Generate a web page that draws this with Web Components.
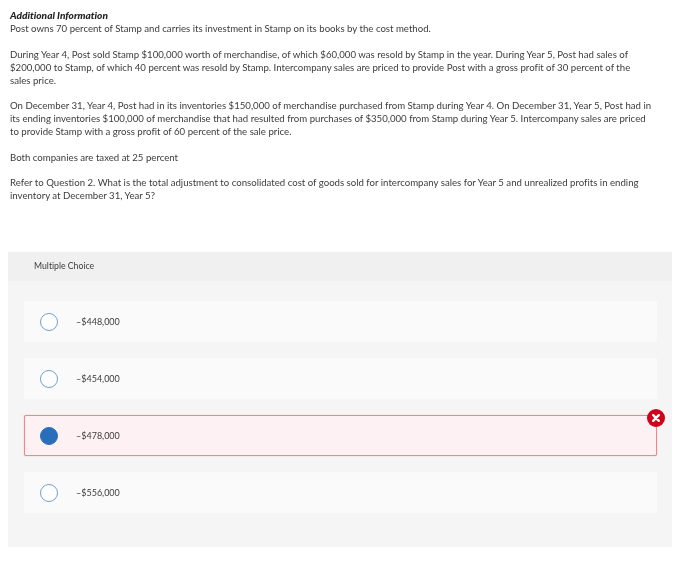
<!DOCTYPE html>
<html>
<head>
<meta charset="utf-8">
<style>
  html, body { margin: 0; background: #fff; }
  body { font-family: Lato, "Liberation Sans", sans-serif; color: #444; width: 689px; height: 561px; overflow: hidden; font-variant-ligatures: none; }
</style>
</head>
<body>
<question-text>
  <b slot="title">Additional Information</b>
  <p>Post owns 70 percent of Stamp and carries its investment in Stamp on its books by the cost method.</p>
  <p>During Year 4, Post sold Stamp $100,000 worth of merchandise, of which $60,000 was resold by Stamp in the year. During Year 5, Post had sales of<br>$200,000 to Stamp, of which 40 percent was resold by Stamp. Intercompany sales are priced to provide Post with a gross profit of 30 percent of the<br>sales price.</p>
  <p>On December 31, Year 4, Post had in its inventories $150,000 of merchandise purchased from Stamp during Year 4. On December 31, Year 5, Post had in<br>its ending inventories $100,000 of merchandise that had resulted from purchases of $350,000 from Stamp during Year 5. Intercompany sales are priced<br>to provide Stamp with a gross profit of 60 percent of the sale price.</p>
  <p>Both companies are taxed at 25 percent</p>
  <p>Refer to Question 2. What is the total adjustment to consolidated cost of goods sold for intercompany sales for Year 5 and unrealized profits in ending<br>inventory at December 31, Year 5?</p>
</question-text>
<choice-panel label="Multiple Choice">
  <choice-option>–$448,000</choice-option>
  <choice-option>–$454,000</choice-option>
  <choice-option selected wrong>–$478,000</choice-option>
  <choice-option>–$556,000</choice-option>
</choice-panel>
<script>
class QuestionText extends HTMLElement {
  connectedCallback() {
    this.shadow = this.attachShadow({ mode: 'open' });
    this.shadow.innerHTML = `<style>${this.css()}</style><div class="title"><slot name="title"></slot></div><div class="body"><slot></slot></div>`;
  }

  css() {
    return `
      :host {
        display: block;
        height: 252px;
        box-sizing: border-box;
        padding: 9px 0 0 10px;
        font-size: 9.64px;
        line-height: 13px;
        color: #3c3c3c;
        white-space: nowrap;
        filter: blur(0.35px);
      }
      .title {
        font-size: 10.1px;
        font-style: italic;
        font-weight: 700;
        color: #222;
      }
      ::slotted(p) {
        margin: 0 0 12.5px;
      }
    `;
  }
}

class ChoicePanel extends HTMLElement {
  connectedCallback() {
    this.shadow = this.attachShadow({ mode: 'open' });
    this.shadow.innerHTML = `<style>${this.css()}</style><div class="head">${this.getAttribute('label')}</div><div class="list"><slot></slot></div>`;
  }

  css() {
    return `
      :host {
        display: block;
        width: 664px;
        height: 294.5px;
        margin-left: 8px;
        background: #f5f5f5;
      }
      .head {
        height: 29px;
        box-sizing: border-box;
        padding-left: 26px;
        background: #f0f0f0;
        font-size: 8.7px;
        line-height: 28px;
        color: #3c3c3c;
        filter: blur(0.35px);
      }
      .list {
        display: flex;
        flex-direction: column;
        gap: 16px;
        padding: 20px 15px 0 16px;
      }
    `;
  }
}

class ChoiceOption extends HTMLElement {
  connectedCallback() {
    this.shadow = this.attachShadow({ mode: 'open' });
    this.shadow.innerHTML = `<style>${this.css()}</style><span class="radio"></span><span class="label"><slot></slot></span>
      <svg class="mark" width="18" height="18" viewBox="0 0 18 18"><circle cx="9" cy="9" r="9" fill="#d0021b"/><path d="M6.2 6.2l5.6 5.6M11.8 6.2l-5.6 5.6" stroke="#fff" stroke-width="2.4" stroke-linecap="round"/></svg>`;
  }

  css() {
    return `
      :host {
        display: flex;
        align-items: center;
        position: relative;
        height: 41px;
        box-sizing: border-box;
        padding-left: 15.5px;
        background: #fafafa;
        font-size: 9px;
        color: #3c3c3c;
      }
      :host([wrong]) {
        background: #fef1f3;
        border: 1px solid #f2858d;
        box-shadow: 0 0 1px #f2858d;
        border-radius: 2px;
        padding-left: 14.5px;
      }
      .radio {
        width: 16px;
        height: 16px;
        border: 1px solid #6fa1cf;
        border-radius: 50%;
        background: #fff;
      }
      :host([selected]) .radio {
        background: #2a6ebb;
        border-color: #2a6ebb;
      }
      .label {
        margin-left: 18.5px;
        filter: blur(0.35px);
      }
      .mark {
        display: none;
        position: absolute;
        top: -7px;
        right: -9px;
      }
      :host([wrong]) .mark {
        display: block;
      }
    `;
  }
}

window.customElements.define('question-text', QuestionText);
window.customElements.define('choice-panel', ChoicePanel);
window.customElements.define('choice-option', ChoiceOption);
</script>
</body>
</html>
